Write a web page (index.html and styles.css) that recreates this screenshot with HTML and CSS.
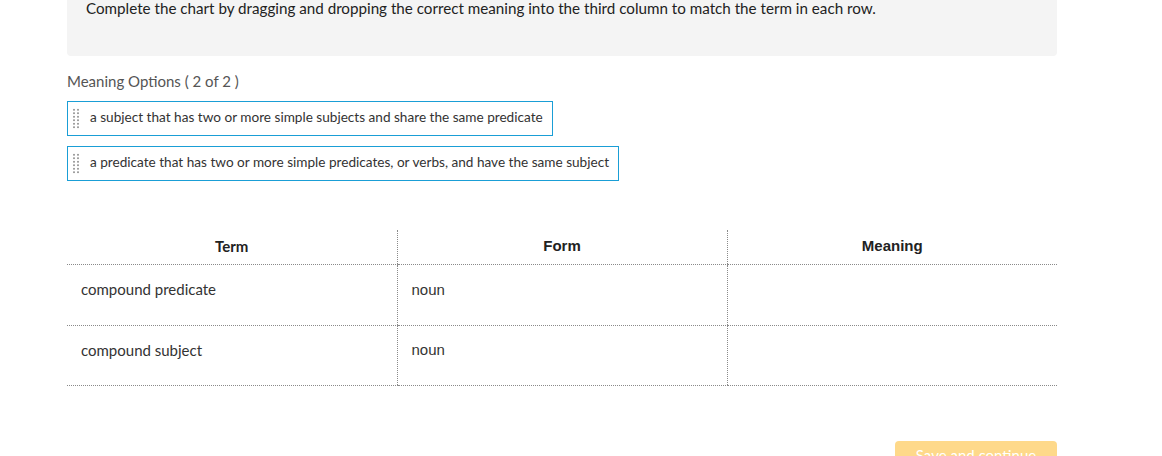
FILE: index.html
```html
<!DOCTYPE html>
<html lang="en">
<head>
	<meta charset="UTF-8">
	<title>Complete the chart</title>
	<link rel="stylesheet" href="styles.css">
</head>
<body>
<div class="page">
	<div class="prompt">
		<p>Complete the chart by dragging and dropping the correct meaning into the third column to match the term in each row.</p>
	</div>

	<div class="options">
		<div class="options-title">Meaning Options ( 2 of 2 )</div>
		<div class="option">
			<span class="handle"></span>
			<span class="option-text">a subject that has two or more simple subjects and share the same predicate</span>
		</div>
		<div class="option">
			<span class="handle"></span>
			<span class="option-text">a predicate that has two or more simple predicates, or verbs, and have the same subject</span>
		</div>
	</div>

	<table class="chart">
		<thead>
			<tr>
				<th>Term</th>
				<th class="arial">Form</th>
				<th class="arial">Meaning</th>
			</tr>
		</thead>
		<tbody>
			<tr>
				<td>compound predicate</td>
				<td class="arial">noun</td>
				<td></td>
			</tr>
			<tr>
				<td>compound subject</td>
				<td class="arial">noun</td>
				<td></td>
			</tr>
		</tbody>
	</table>

	<div class="actions">
		<button class="save" disabled>Save and continue</button>
	</div>
</div>
</body>
</html>
```

FILE: styles.css
```css
body {
	margin: 0;
	font-family: Lato, "Liberation Sans", sans-serif;
	color: #333;
	background: #fff;
}

.page {
	width: 990px;
	margin-left: 67px;
}

/* INSTRUCTIONS BOX */
.prompt {
	background: #f4f4f4;
	border-radius: 0 0 4px 4px;
	padding: 0 19px;
	height: 56px;
}

.prompt p {
	margin: 0;
	font-size: 15.2px;
	line-height: 17px;
	color: #222;
}

/* DRAG OPTIONS */
.options {
	padding-top: 15px;
}

.options-title {
	font-size: 15px;
	line-height: 20px;
	color: #555;
	margin-bottom: 10px;
}

.option {
	display: flex;
	align-items: center;
	box-sizing: border-box;
	width: fit-content;
	height: 35px;
	border: 1px solid #1a9ed6;
	margin-bottom: 10px;
	padding: 0 9px 3px 4px;
	background: #fff;
}

.handle {
	width: 8px;
	height: 21px;
	margin: 3px 10px 0 0;
	background-image: radial-gradient(circle, #a0a0a0 1px, transparent 1.3px);
	background-size: 4px 3.5px;
}

.option-text {
	font-size: 13.6px;
	color: #333;
}

/* CHART */
.chart {
	width: 990px;
	margin-top: 49px;
	border-collapse: collapse;
	table-layout: fixed;
}

.chart th {
	height: 31px;
	padding: 0 0 3px;
	font-size: 15px;
	font-weight: bold;
	color: #222;
	text-align: center;
	border-bottom: 1px dotted #8a8a8a;
}

.chart td {
	height: 47px;
	padding: 0 14px 12px;
	font-size: 15px;
	color: #333;
	border-bottom: 1px dotted #8a8a8a;
}

.chart tbody tr:first-child td {
	height: 48px;
}

.chart th + th,
.chart td + td {
	border-left: 1px dotted #8a8a8a;
}

.chart .arial {
	font-family: "Liberation Sans", Arial, sans-serif;
}

/* FOOTER BUTTON */
.actions {
	display: flex;
	justify-content: flex-end;
	padding-top: 55px;
}

.save {
	width: 162px;
	height: 40px;
	border: none;
	border-radius: 4px;
	background: #fed98a;
	color: #fff;
	font-family: Lato, "Liberation Sans", sans-serif;
	font-size: 15px;
	line-height: 18px;
	padding: 0 0 12px;
	align-self: flex-start;
}
```
